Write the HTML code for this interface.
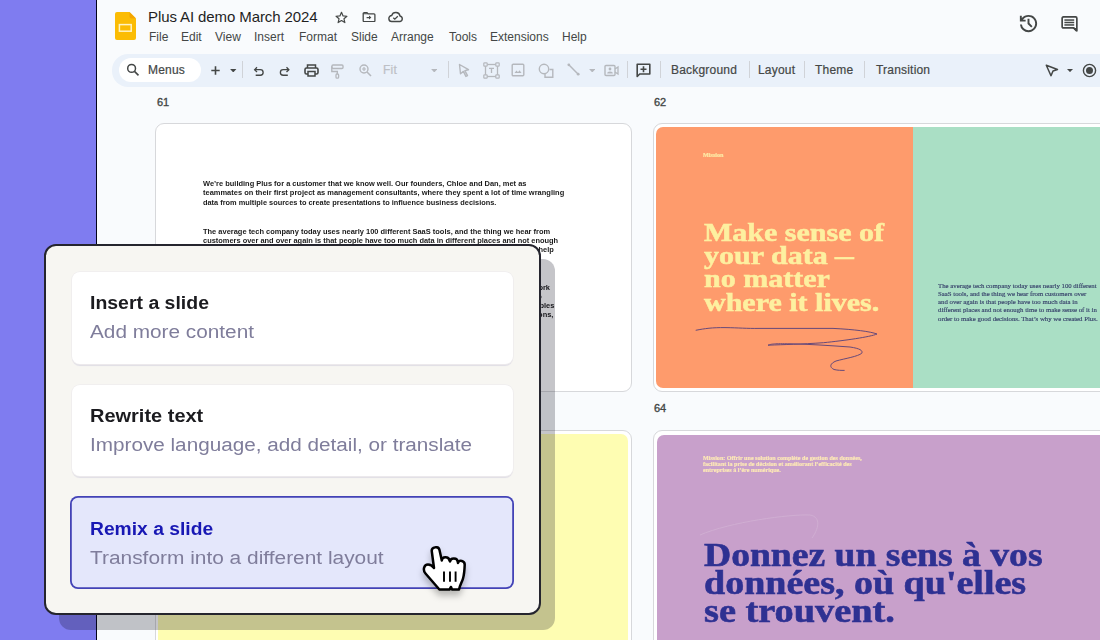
<!DOCTYPE html>
<html><head><meta charset="utf-8">
<style>
*{box-sizing:border-box;margin:0;padding:0}
html,body{width:1100px;height:640px;overflow:hidden;background:#f9fbfd;font-family:"Liberation Sans",sans-serif}
.abs{position:absolute}
#left{left:0;top:0;width:96px;height:640px;background:#7f7cf0}
#vline{left:96px;top:0;width:1px;height:640px;background:#03031a;box-shadow:0 0 0.6px #03031a}
.t{position:absolute;white-space:nowrap;line-height:1}
.menu{font-size:12px;color:#444746;top:31px}
.tb{font-size:12px;color:#444746;top:64px;letter-spacing:0.2px;-webkit-text-stroke:0.2px #444746}
.sep{position:absolute;top:61px;width:1px;height:17px;background:#d0d3d8}
.slide{position:absolute;border:1px solid #d7d8db;border-radius:9px;background:#fff;overflow:hidden}
.s61,.s61r{position:absolute;font-size:8px;font-weight:700;color:#1a1a1a;line-height:1;white-space:nowrap;transform-origin:0 0}
.s61r{transform:scaleX(0.93);transform-origin:100% 0}
.num{position:absolute;font-size:11px;font-weight:400;color:#444746;-webkit-text-stroke:0.35px #444746;line-height:1}
</style></head>
<body>
<div id="left" class="abs"></div>
<div id="vline" class="abs"></div>

<!-- doc icon -->
<svg class="abs" style="left:115px;top:12px" width="21" height="28" viewBox="0 0 21 28">
  <path d="M2 0h12.5l6.5 6.5V26a2 2 0 0 1-2 2H2a2 2 0 0 1-2-2V2a2 2 0 0 1 2-2z" fill="#fbbc04"/>
  <path d="M14.5 0l6.5 6.5h-4.5a2 2 0 0 1-2-2z" fill="#f4a500"/>
  <rect x="4.4" y="12.6" width="11.8" height="6.6" fill="none" stroke="#fff3c4" stroke-width="1.5"/>
</svg>
<div class="t" style="left:148px;top:9px;font-size:15px;color:#1f1f1f;letter-spacing:-0.1px">Plus AI demo March 2024</div>

<!-- title icons -->
<svg class="abs" style="left:335px;top:10.5px" width="13" height="13" viewBox="0 0 24 24"><path d="M12 2.5l2.9 6.6 7.1.6-5.4 4.7 1.6 7-6.2-3.7-6.2 3.7 1.6-7L2 9.7l7.1-.6z" fill="none" stroke="#444746" stroke-width="2.2" stroke-linejoin="round"/></svg>
<svg class="abs" style="left:361.5px;top:12px" width="14" height="10" viewBox="0 0 14 10"><path d="M1.2 1.6a.9.9 0 0 1 .9-.9H5l1.2 1.2H12a.9.9 0 0 1 .9.9v5.9a.9.9 0 0 1-.9.9H2.1a.9.9 0 0 1-.9-.9z" fill="none" stroke="#444746" stroke-width="1.3"/><path d="M1.2 1.2h3.6l1 1H1.2z" fill="#444746"/><path d="M4.6 4.9h2.4V3.6l2.4 2-2.4 2V6.3H4.6z" fill="#444746"/></svg>
<svg class="abs" style="left:388px;top:11px" width="15" height="12" viewBox="0 0 15 12"><path d="M4 10.5a3 3 0 0 1-.3-6A4.3 4.3 0 0 1 12 5a2.8 2.8 0 0 1 0 5.5z" fill="none" stroke="#444746" stroke-width="1.4"/><path d="M5.3 6.8l1.5 1.4 3-3" fill="none" stroke="#444746" stroke-width="1.3"/></svg>

<!-- menu -->
<div class="t menu" style="left:149px">File</div>
<div class="t menu" style="left:181px">Edit</div>
<div class="t menu" style="left:215px">View</div>
<div class="t menu" style="left:254px">Insert</div>
<div class="t menu" style="left:299px">Format</div>
<div class="t menu" style="left:351px">Slide</div>
<div class="t menu" style="left:391px">Arrange</div>
<div class="t menu" style="left:449px">Tools</div>
<div class="t menu" style="left:490px">Extensions</div>
<div class="t menu" style="left:562px">Help</div>

<!-- right header icons -->
<svg class="abs" style="left:1017px;top:12px" width="23" height="23" viewBox="0 -960 960 960"><path d="M480-120q-138 0-240.5-91.5T122-440h82q14 104 92.5 172T480-200q117 0 198.5-81.5T760-480q0-117-81.5-198.5T480-760q-69 0-129 32t-101 88h110v80H120v-240h80v94q51-64 124.5-99T480-840q75 0 140.5 28.5t114 77q48.5 48.5 77 114T840-480q0 75-28.5 140.5t-77 114q-48.5 48.5-114 77T480-120Zm112-192L440-464v-216h80v184l128 128-56 56Z" fill="#444746"/></svg>
<svg class="abs" style="left:1059px;top:14px" width="20" height="20" viewBox="0 0 20 20"><path d="M4.4 2.95H16.6Q17.85 2.95 17.85 4.2V16.8L14.8 13.95H4.4Q3.15 13.95 3.15 12.7V4.2Q3.15 2.95 4.4 2.95Z" fill="none" stroke="#444746" stroke-width="1.7" stroke-linejoin="round"/><path d="M17 13.9v3.7l-3.5-3.7z" fill="#444746"/><rect x="5.4" y="5.3" width="9.8" height="1.5" fill="#444746"/><rect x="5.4" y="7.75" width="9.8" height="1.5" fill="#444746"/><rect x="5.4" y="10.2" width="9.8" height="1.5" fill="#444746"/></svg>

<!-- toolbar -->
<div class="abs" style="left:112px;top:54px;width:1100px;height:32.5px;border-radius:16px;background:#eaf1fa"></div>
<div class="abs" style="left:119px;top:58px;width:82px;height:23.5px;border-radius:12px;background:#fff"></div>
<svg class="abs" style="left:126px;top:63px" width="14" height="14" viewBox="0 0 14 14"><circle cx="5.6" cy="5.4" r="3.9" fill="none" stroke="#444746" stroke-width="1.5"/><path d="M8.5 8.4l4 4" stroke="#444746" stroke-width="1.6"/></svg>
<div class="t tb" style="left:148px;top:64px">Menus</div>


<!-- toolbar icons -->
<svg class="abs" style="left:210.5px;top:65.5px" width="9" height="9" viewBox="0 0 9 9"><path d="M4.5 0.3v8.4M0.3 4.5h8.4" stroke="#444746" stroke-width="1.6"/></svg>
<svg class="abs" style="left:230px;top:68.8px" width="6.5" height="3.5" viewBox="0 0 8 4.5"><path d="M0 0h8L4 4.5z" fill="#444746"/></svg>
<div class="sep" style="left:242px"></div>
<svg class="abs" style="left:253px;top:66px" width="11.5" height="10.5" viewBox="0 0 13 12"><path d="M4.5 1.5L1.8 4.2l2.7 2.7" fill="none" stroke="#444746" stroke-width="1.5"/><path d="M2 4.2h6.3a3.2 3.2 0 0 1 0 6.4H3" fill="none" stroke="#444746" stroke-width="1.5"/></svg>
<svg class="abs" style="left:279px;top:66px" width="11.5" height="10.5" viewBox="0 0 13 12"><path d="M8.5 1.5l2.7 2.7-2.7 2.7" fill="none" stroke="#444746" stroke-width="1.5"/><path d="M11 4.2H4.7a3.2 3.2 0 0 0 0 6.4H10" fill="none" stroke="#444746" stroke-width="1.5"/></svg>
<svg class="abs" style="left:304px;top:64px" width="15" height="13" viewBox="0 0 15 13"><path d="M3.5 4V1h8v3" fill="none" stroke="#444746" stroke-width="1.5"/><rect x="1" y="4" width="13" height="6" rx="1.5" fill="none" stroke="#444746" stroke-width="1.6"/><rect x="4" y="7.5" width="7" height="4.5" fill="#eaf1fa" stroke="#444746" stroke-width="1.5"/></svg>
<svg class="abs" style="left:331px;top:64px" width="13" height="15" viewBox="0 0 13 15"><rect x="1" y="1" width="11" height="3.5" rx="1" fill="none" stroke="#b5b8bd" stroke-width="1.4"/><path d="M1 3H.8v4.5h5.5v2.5" fill="none" stroke="#b5b8bd" stroke-width="1.4"/><rect x="5" y="10" width="2.6" height="4.2" rx="1" fill="none" stroke="#b5b8bd" stroke-width="1.3"/></svg>
<svg class="abs" style="left:359px;top:64px" width="13" height="13" viewBox="0 0 13 13"><circle cx="5" cy="5" r="4" fill="none" stroke="#b5b8bd" stroke-width="1.4"/><path d="M5 3v4M3 5h4" stroke="#b5b8bd" stroke-width="1.2"/><path d="M8 8l4 4" stroke="#b5b8bd" stroke-width="1.6"/></svg>
<div class="t tb" style="left:383px;color:#bdc0c5;-webkit-text-stroke:0.2px #bdc0c5">Fit</div>
<svg class="abs" style="left:430.5px;top:68.5px" width="6.5" height="3.5" viewBox="0 0 8 4.5"><path d="M0 0h8L4 4.5z" fill="#b5b8bd"/></svg>
<div class="sep" style="left:448px"></div>
<svg class="abs" style="left:458px;top:63px" width="12" height="15" viewBox="0 0 12 15"><path d="M1.5 1.5l9 5.2-3.6.9 2.6 5-1.6.8-2.5-5-2.9 2.4z" fill="none" stroke="#b5b8bd" stroke-width="1.4" stroke-linejoin="round"/></svg>
<svg class="abs" style="left:483px;top:62px" width="17" height="17" viewBox="0 0 17 17"><rect x="2.5" y="2.5" width="12" height="12" fill="none" stroke="#b5b8bd" stroke-width="1.3"/><rect x="0.8" y="0.8" width="3.4" height="3.4" rx=".8" fill="#eaf1fa" stroke="#b5b8bd" stroke-width="1.2"/><rect x="12.8" y="0.8" width="3.4" height="3.4" rx=".8" fill="#eaf1fa" stroke="#b5b8bd" stroke-width="1.2"/><rect x="0.8" y="12.8" width="3.4" height="3.4" rx=".8" fill="#eaf1fa" stroke="#b5b8bd" stroke-width="1.2"/><rect x="12.8" y="12.8" width="3.4" height="3.4" rx=".8" fill="#eaf1fa" stroke="#b5b8bd" stroke-width="1.2"/><path d="M6 6.3h5M8.5 6.3v4.8" stroke="#b5b8bd" stroke-width="1.3"/></svg>
<svg class="abs" style="left:511px;top:63px" width="14" height="14" viewBox="0 0 14 14"><rect x="1.2" y="1.2" width="11.6" height="11.6" rx="1" fill="none" stroke="#b5b8bd" stroke-width="1.4"/><path d="M3.5 10l2-2.5 1.5 1.8 1.5-2 2 2.7z" fill="#b5b8bd"/></svg>
<svg class="abs" style="left:538px;top:63px" width="16" height="15" viewBox="0 0 16 15"><circle cx="6" cy="6" r="4.7" fill="none" stroke="#b5b8bd" stroke-width="1.4"/><path d="M11.5 6.5h3.3v7.8H7V11" fill="none" stroke="#b5b8bd" stroke-width="1.4"/></svg>
<svg class="abs" style="left:567px;top:63px" width="13" height="13" viewBox="0 0 13 13"><path d="M1.8 1.8l9.4 9.4" stroke="#b5b8bd" stroke-width="1.5"/><circle cx="1.8" cy="1.8" r="1.4" fill="#b5b8bd"/><circle cx="11.2" cy="11.2" r="1.4" fill="#b5b8bd"/></svg>
<svg class="abs" style="left:588.8px;top:68.6px" width="6.5" height="3.5" viewBox="0 0 8 4.5"><path d="M0 0h8L4 4.5z" fill="#b5b8bd"/></svg>
<svg class="abs" style="left:604px;top:64px" width="15" height="13" viewBox="0 0 15 13"><rect x="1" y="1.5" width="10" height="10" rx="1" fill="none" stroke="#b5b8bd" stroke-width="1.4"/><path d="M11 5l3-2v7l-3-2" fill="none" stroke="#b5b8bd" stroke-width="1.3"/><circle cx="6" cy="5" r="1.4" fill="#b5b8bd"/><path d="M3.2 9.5a2.8 2 0 0 1 5.6 0z" fill="#b5b8bd"/></svg>
<div class="sep" style="left:627px"></div>
<svg class="abs" style="left:636px;top:63px" width="15" height="15" viewBox="0 0 15 15"><path d="M1.2 1.2h12.6v9.8H3.7L1.2 13.5z" fill="none" stroke="#444746" stroke-width="1.6" stroke-linejoin="round"/><path d="M7.5 3.2v6M4.5 6.2h6" stroke="#444746" stroke-width="1.6"/></svg>
<div class="sep" style="left:660px"></div>
<div class="t tb" style="left:671px">Background</div>
<div class="sep" style="left:749px"></div>
<div class="t tb" style="left:758px">Layout</div>
<div class="sep" style="left:804px"></div>
<div class="t tb" style="left:815px">Theme</div>
<div class="sep" style="left:864px"></div>
<div class="t tb" style="left:876px">Transition</div>
<svg class="abs" style="left:1045px;top:64px" width="14" height="13" viewBox="0 0 14 13"><path d="M1.3 1.2l11.2 4.3-4.5 1.5-2 4.8z" fill="none" stroke="#444746" stroke-width="1.5" stroke-linejoin="round"/></svg>
<svg class="abs" style="left:1066.5px;top:68.8px" width="6" height="3.5" viewBox="0 0 7 4"><path d="M0 0h7L3.5 3.6z" fill="#444746"/></svg>
<svg class="abs" style="left:1082px;top:63px" width="15" height="15" viewBox="0 0 15 15"><circle cx="7.5" cy="7.5" r="6.1" fill="none" stroke="#444746" stroke-width="1.4"/><circle cx="7.5" cy="7.5" r="3.5" fill="#444746"/></svg>

<!-- slide numbers -->
<div class="num" style="left:157px;top:97px">61</div>
<div class="num" style="left:654px;top:97px">62</div>
<div class="num" style="left:654px;top:403px">64</div>

<!-- slide 61 -->
<div class="slide" style="left:155px;top:123px;width:477px;height:269px">
 <div class="s61" style="left:47px;top:56.1px;transform:scaleX(0.932)">We’re building Plus for a customer that we know well. Our founders, Chloe and Dan, met as</div>
 <div class="s61" style="left:47px;top:65.3px;transform:scaleX(0.935)">teammates on their first project as management consultants, where they spent a lot of time wrangling</div>
 <div class="s61" style="left:47px;top:74.5px;transform:scaleX(0.923)">data from multiple sources to create presentations to influence business decisions.</div>
 <div class="s61" style="left:47px;top:103.5px;transform:scaleX(0.933)">The average tech company today uses nearly 100 different SaaS tools, and the thing we hear from</div>
 <div class="s61" style="left:47px;top:112.7px;transform:scaleX(0.929)">customers over and over again is that people have too much data in different places and not enough</div>
 <div class="s61r" style="right:77.5px;top:122.1px">time to make sense of it in order to make good decisions, and that they need help</div>
 <div class="s61r" style="right:161.0px;top:131.3px">to present it in a way that makes an impact.</div>
 <div class="s61r" style="right:81.0px;top:159.7px">Our mission is to help people make sense of their data so they can do their best work</div>
 <div class="s61r" style="right:89.5px;top:168.9px">and make better decisions. We want you to go from data to</div>
 <div class="s61r" style="right:76.5px;top:178.1px">beautiful presentations in minutes, with a platform that connects and enables</div>
 <div class="s61r" style="right:77.5px;top:187.3px">better conversations, faster insights, and more impactful decisions,</div>
</div>

<!-- slide 62 -->
<div class="slide" style="left:653px;top:123px;width:500px;height:269px">
 <div class="abs" style="left:2px;top:3px;width:258px;height:261px;background:#fe9b6c;border-radius:7px 0 0 7px"></div>
 <div class="abs" style="left:259px;top:3px;width:300px;height:261px;background:#aadfc5"></div>
 <div class="t" style="left:49px;top:28.5px;font-family:'Liberation Serif';font-weight:700;font-size:5.6px;color:#fde8a4;-webkit-text-stroke:0.2px #fde8a4;transform:scaleX(1.1);transform-origin:0 0">Mission</div>
 <div style="position:absolute;left:50px;top:96.5px;font-family:'Liberation Serif';font-weight:700;font-size:25px;line-height:23.4px;color:#fdf0a0;-webkit-text-stroke:0.5px #fdf0a0;white-space:nowrap;transform:scaleX(1.2);transform-origin:0 0">Make sense of<br>your data <span style="display:inline-block;transform:scaleX(0.64);transform-origin:0 50%">—</span><br>no matter<br>where it lives.</div>
 <div style="position:absolute;left:284px;top:157.8px;font-family:'Liberation Serif';font-size:7px;line-height:8.2px;color:#36406a;-webkit-text-stroke:0.15px #36406a;white-space:nowrap;transform:scaleX(0.97);transform-origin:0 0">The average tech company today uses nearly 100 different<br>SaaS tools, and the thing we hear from customers over<br>and over again is that people have too much data in<br>different places and not enough time to make sense of it in<br>order to make good decisions. That’s why we created Plus.</div>
 <svg class="abs" style="left:0;top:0" width="260" height="264" viewBox="654 124 260 264"><path d="M695.7 330.3 C705 328.5 712 327.5 725 327.6 C740 327.8 745 328.6 760 328.4 L833 328.4 C855 329.5 870 331.5 877 334 C870 337 845 340.5 823.6 342.7 C800 344.3 785 344.5 768 345.2 C772 343.8 774 343.6 790 343.8 C810 344.2 830 345.6 850 347 C860 348.5 863 350.5 861.8 353.2 C858 356.5 845 358.5 836 361 C830 363.5 829 367 834 369.5 C838 370.4 841 370.4 844.6 370.4" fill="none" stroke="#66497a" stroke-width="1"/></svg>
</div>

<!-- slide 63 -->
<div class="slide" style="left:155px;top:430px;width:477px;height:260px">
 <div class="abs" style="left:2px;top:3px;width:470px;height:260px;background:#fefdb2;border-radius:7px 7px 0 0"></div>
</div>

<!-- slide 64 -->
<div class="slide" style="left:653px;top:430px;width:500px;height:260px">
 <div class="abs" style="left:3px;top:4px;width:500px;height:260px;background:#c8a0cb;border-radius:7px 0 0 0"></div>
 <div style="position:absolute;left:49px;top:23.5px;font-family:'Liberation Serif';font-weight:700;font-size:5.5px;line-height:6px;color:#fde9b6;-webkit-text-stroke:0.15px #fde9b6;white-space:nowrap;transform:scaleX(1.106);transform-origin:0 0">Mission: Offrir une solution complète de gestion des données,<br>facilitant la prise de décision et améliorant l’efficacité des<br>entreprises à l’ère numérique.</div>
 <svg class="abs" style="left:0;top:0" width="500" height="260" viewBox="654 431 500 260"><path d="M700 535 C730 522 790 514 810 515 C822 517 818 530 812 538" fill="none" stroke="#d0afd3" stroke-width="0.9"/></svg>
 <div style="position:absolute;left:50px;font-family:'Liberation Serif';font-weight:700;font-size:34px;line-height:34px;color:#2e3192;-webkit-text-stroke:0.6px #2e3192;white-space:nowrap;transform-origin:0 0;top:106.55px;transform:scaleX(1.106)">Donnez un sens à vos</div>
 <div style="position:absolute;left:50px;font-family:'Liberation Serif';font-weight:700;font-size:34px;line-height:34px;color:#2e3192;-webkit-text-stroke:0.6px #2e3192;white-space:nowrap;transform-origin:0 0;top:134.65px;transform:scaleX(1.118)">données, où qu'elles</div>
 <div style="position:absolute;left:50px;font-family:'Liberation Serif';font-weight:700;font-size:34px;line-height:34px;color:#2e3192;-webkit-text-stroke:0.6px #2e3192;white-space:nowrap;transform-origin:0 0;top:162.75px;transform:scaleX(1.127)">se trouvent.</div>
</div>

<!-- panel -->
<div class="abs" style="left:59px;top:259px;width:495.5px;height:371px;border-radius:12px;background:rgba(10,10,25,0.235)"></div>
<div class="abs" style="left:44px;top:244px;width:496.5px;height:370.5px;border-radius:12px;background:#f7f6f2;border:2px solid #25252e"></div>

<div class="abs card" style="left:71.5px;top:271.5px;width:441.5px;height:92px;border-radius:8px;background:#fff;box-shadow:0 0 0 0.8px #efedee,0 1.2px 0.8px #e0dee6"></div>
<div class="t" style="left:90px;top:294px;font-size:18px;font-weight:700;color:#1b1b1f;transform:scaleX(1.081);transform-origin:0 0">Insert a slide</div>
<div class="t" style="left:90px;top:323px;font-size:18px;color:#7f7d9b;transform:scaleX(1.154);transform-origin:0 0">Add more content</div>

<div class="abs card" style="left:71.5px;top:385px;width:441.5px;height:91px;border-radius:8px;background:#fff;box-shadow:0 0 0 0.8px #efedee,0 1.2px 0.8px #e0dee6"></div>
<div class="t" style="left:90px;top:407px;font-size:18px;font-weight:700;color:#1b1b1f;transform:scaleX(1.11);transform-origin:0 0">Rewrite text</div>
<div class="t" style="left:90px;top:436px;font-size:18px;color:#7f7d9b;transform:scaleX(1.15);transform-origin:0 0">Improve language, add detail, or translate</div>

<div class="abs card" style="left:70px;top:496px;width:444px;height:93px;border-radius:8px;background:#e4e7fb;box-shadow:inset 0 0 0 1.8px #4343b6"></div>
<div class="t" style="left:90px;top:519.8px;font-size:18px;font-weight:700;color:#1818b4;transform:scaleX(1.07);transform-origin:0 0">Remix a slide</div>
<div class="t" style="left:90px;top:549px;font-size:18px;color:#7f7d9b;transform:scaleX(1.16);transform-origin:0 0">Transform into a different layout</div>

<!-- hand cursor -->
<svg class="abs" style="left:415px;top:535px;filter:drop-shadow(0 5px 3px rgba(0,0,0,0.25))" width="60" height="65" viewBox="0 0 60 65">
 <path d="M24.4 54.5 L10.5 38.5 C7.5 35 9 29.5 13 29.5 C15.5 29.5 17.5 31 19 33 L16.8 16.5 C16 12 23.5 10.5 24.5 15 L26.8 25.5 C27 21.5 33.5 21 34.5 25.5 L35 26.5 C35.5 22.5 42.5 22.5 42.8 27 L43 28 C44 24.5 50 25.5 49.7 30 C49.5 36 49 40 48 43.5 C47 47 45 50 44 54.5 L37 54.5 L36 52 L34.5 54.5 Z" fill="#fff" stroke="#000" stroke-width="2.5" stroke-linejoin="round"/>
 <path d="M29 36.5v10.2M35 36.5v10.2M40.6 36.5v10.2" stroke="#000" stroke-width="1.9"/>
</svg>

</body></html>
